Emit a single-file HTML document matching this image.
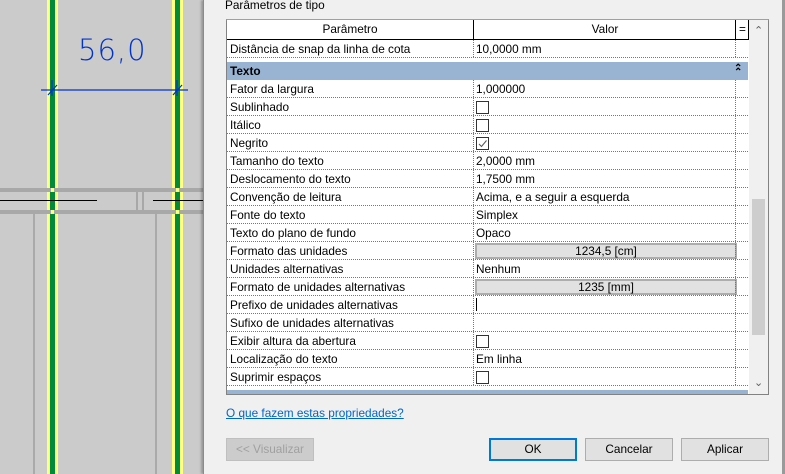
<!DOCTYPE html>
<html><head><meta charset="utf-8"><style>
*{margin:0;padding:0;box-sizing:border-box}
body{width:785px;height:474px;overflow:hidden;background:#cbcbcb;font-family:"Liberation Sans",sans-serif;font-size:11.8px;color:#000;position:relative}
.a{position:absolute}
.dlg{left:203px;top:0;width:579px;height:474px;background:#f0f0f0;border-left:1px solid #8a8a8a;box-shadow:-2px 0 2px rgba(0,0,0,.25)}
.row{position:absolute;left:227px;width:521px;height:18px;border-bottom:1px dotted #777;background:#fff}
.row span{position:absolute;top:2px;left:3px;white-space:nowrap}
.row .v{left:249px}
.vl{position:absolute;top:0;bottom:0;border-left:1px dotted #777}
.cb{position:absolute;left:249px;top:3px;width:13px;height:13px;border:1px solid #333;background:#fff}
.btnc{position:absolute;left:248px;top:1px;width:262px;height:16px;background:#e1e1e1;border:2px solid #adadad;text-align:center;line-height:12px}
.btn{position:absolute;top:438px;height:23px;width:88px;background:#e1e1e1;border:1px solid #adadad;text-align:center;line-height:21px}
</style></head><body>
<div class="a" style="left:47px;top:0;width:11px;height:474px;background:#ffff80"></div>
<div class="a" style="left:50px;top:0;width:5px;height:474px;background:#008a3a"></div>
<div class="a" style="left:172px;top:0;width:11px;height:474px;background:#ffff80"></div>
<div class="a" style="left:175px;top:0;width:5px;height:474px;background:#008a3a"></div>
<div class="a" style="left:0;top:188px;width:203px;height:4px;background:#a8a8a8"></div>
<div class="a" style="left:0;top:210px;width:203px;height:4px;background:#a8a8a8"></div>
<div class="a" style="left:0;top:200px;width:97px;height:1px;background:#000"></div>
<div class="a" style="left:153px;top:200px;width:50px;height:1px;background:#000"></div>
<div class="a" style="left:136px;top:192px;width:8px;height:18px;border-left:2px solid #a8a8a8;border-right:2px solid #a8a8a8"></div>
<div class="a" style="left:33px;top:214px;width:2px;height:260px;background:#aaa"></div>
<div class="a" style="left:155px;top:214px;width:2px;height:260px;background:#aaa"></div>
<div class="a" style="left:51px;top:188px;width:3px;height:4px;background:#ffff80"></div>
<div class="a" style="left:51px;top:210px;width:3px;height:4px;background:#ffff80"></div>
<div class="a" style="left:176px;top:188px;width:3px;height:4px;background:#ffff80"></div>
<div class="a" style="left:176px;top:210px;width:3px;height:4px;background:#ffff80"></div>
<div class="a" style="left:78px;top:33px;font-size:29px;color:#0033cc;letter-spacing:1px;font-family:'DejaVu Sans',sans-serif;font-weight:200">56,0</div>
<svg class="a" style="left:0;top:0" width="200" height="120"><g stroke="#0033cc" stroke-width="1.2"><line x1="41" y1="90" x2="188" y2="90"/><line x1="48" y1="95" x2="57" y2="85"/><line x1="173" y1="95" x2="182" y2="85"/><line x1="52" y1="80" x2="52" y2="96"/><line x1="177" y1="80" x2="177" y2="96"/></g></svg>
<div class="a" style="left:782px;top:0;width:3px;height:474px;background:#9a9a9a"></div>
<div class="a dlg"></div>
<div class="a" style="left:225px;top:-2px">Parâmetros de tipo</div>
<div class="a" style="left:226px;top:19px;width:543px;height:376px;border:1px solid #828282;border-top:2px solid #a0a0a0;background:#fff"></div>
<div class="a" style="left:227px;top:20px;width:521px;height:20px;background:#fff;border-bottom:1px solid #000"></div>
<div class="a" style="left:227px;top:22px;width:246px;text-align:center">Parâmetro</div>
<div class="a" style="left:473px;top:20px;width:1px;height:20px;background:#000"></div>
<div class="a" style="left:474px;top:22px;width:262px;text-align:center">Valor</div>
<div class="a" style="left:735px;top:20px;width:1px;height:20px;background:#000"></div>
<div class="a" style="left:739px;top:22px">=</div>
<div class="a" style="left:748px;top:20px;width:1px;height:20px;background:#000"></div>
<div class="row" style="top:40px"><span>Distância de snap da linha de cota</span><span class="v">10,0000 mm</span><div class="vl" style="left:246px"></div><div class="vl" style="left:508px"></div></div>
<div class="a" style="left:227px;top:62px;width:521px;height:18px;background:#98b4d2"></div>
<div class="a" style="left:230px;top:64px;font-weight:bold">Texto</div>
<div class="a" style="left:734px;top:63px;font-size:10px;font-weight:bold">⌃</div>
<div class="a" style="left:734px;top:67px;font-size:10px;font-weight:bold">⌃</div>
<div class="row" style="top:80px"><span>Fator da largura</span><span class="v">1,000000</span><div class="vl" style="left:246px"></div><div class="vl" style="left:508px"></div></div>
<div class="row" style="top:98px"><span>Sublinhado</span><div class="cb"></div><div class="vl" style="left:246px"></div><div class="vl" style="left:508px"></div></div>
<div class="row" style="top:116px"><span>Itálico</span><div class="cb"></div><div class="vl" style="left:246px"></div><div class="vl" style="left:508px"></div></div>
<div class="row" style="top:134px"><span>Negrito</span><div class="cb"><svg width="11" height="11" style="position:absolute;left:0;top:0"><path d="M2 6 L4.5 8.5 L9.5 2.5" stroke="#555" fill="none" stroke-width="1"/></svg></div><div class="vl" style="left:246px"></div><div class="vl" style="left:508px"></div></div>
<div class="row" style="top:152px"><span>Tamanho do texto</span><span class="v">2,0000 mm</span><div class="vl" style="left:246px"></div><div class="vl" style="left:508px"></div></div>
<div class="row" style="top:170px"><span>Deslocamento do texto</span><span class="v">1,7500 mm</span><div class="vl" style="left:246px"></div><div class="vl" style="left:508px"></div></div>
<div class="row" style="top:188px"><span>Convenção de leitura</span><span class="v">Acima, e a seguir a esquerda</span><div class="vl" style="left:246px"></div><div class="vl" style="left:508px"></div></div>
<div class="row" style="top:206px"><span>Fonte do texto</span><span class="v">Simplex</span><div class="vl" style="left:246px"></div><div class="vl" style="left:508px"></div></div>
<div class="row" style="top:224px"><span>Texto do plano de fundo</span><span class="v">Opaco</span><div class="vl" style="left:246px"></div><div class="vl" style="left:508px"></div></div>
<div class="row" style="top:242px"><span>Formato das unidades</span><div class="btnc">1234,5 [cm]</div><div class="vl" style="left:246px"></div><div class="vl" style="left:508px"></div></div>
<div class="row" style="top:260px"><span>Unidades alternativas</span><span class="v">Nenhum</span><div class="vl" style="left:246px"></div><div class="vl" style="left:508px"></div></div>
<div class="row" style="top:278px"><span>Formato de unidades alternativas</span><div class="btnc">1235 [mm]</div><div class="vl" style="left:246px"></div><div class="vl" style="left:508px"></div></div>
<div class="row" style="top:296px"><span>Prefixo de unidades alternativas</span><div class="a" style="left:249px;top:2px;width:1px;height:13px;background:#000"></div><div class="vl" style="left:246px"></div><div class="vl" style="left:508px"></div></div>
<div class="row" style="top:314px"><span>Sufixo de unidades alternativas</span><div class="vl" style="left:246px"></div><div class="vl" style="left:508px"></div></div>
<div class="row" style="top:332px"><span>Exibir altura da abertura</span><div class="cb"></div><div class="vl" style="left:246px"></div><div class="vl" style="left:508px"></div></div>
<div class="row" style="top:350px"><span>Localização do texto</span><span class="v">Em linha</span><div class="vl" style="left:246px"></div><div class="vl" style="left:508px"></div></div>
<div class="row" style="top:368px"><span>Suprimir espaços</span><div class="cb"></div><div class="vl" style="left:246px"></div><div class="vl" style="left:508px"></div></div>
<div class="a" style="left:227px;top:390px;width:521px;height:4px;background:#98b4d2"></div>
<div class="a" style="left:749px;top:20px;width:19px;height:374px;background:#f0f0f0"></div>
<div class="a" style="left:752px;top:199px;width:13px;height:136px;background:#cdcdcd"></div>
<div class="a" style="left:754px;top:24px;font-size:11px;color:#606060">⌃</div>
<div class="a" style="left:754px;top:376px;font-size:11px;color:#606060">⌄</div>
<div class="a" style="left:226px;top:406px;color:#0066cc;text-decoration:underline">O que fazem estas propriedades?</div>
<div class="btn" style="left:226px;color:#a0a0a0;background:#cccccc;border-color:#bfbfbf">&lt;&lt; Visualizar</div>
<div class="btn" style="left:489px;border:2px solid #0078d7;line-height:19px">OK</div>
<div class="btn" style="left:585px">Cancelar</div>
<div class="btn" style="left:681px">Aplicar</div>
</body></html>
